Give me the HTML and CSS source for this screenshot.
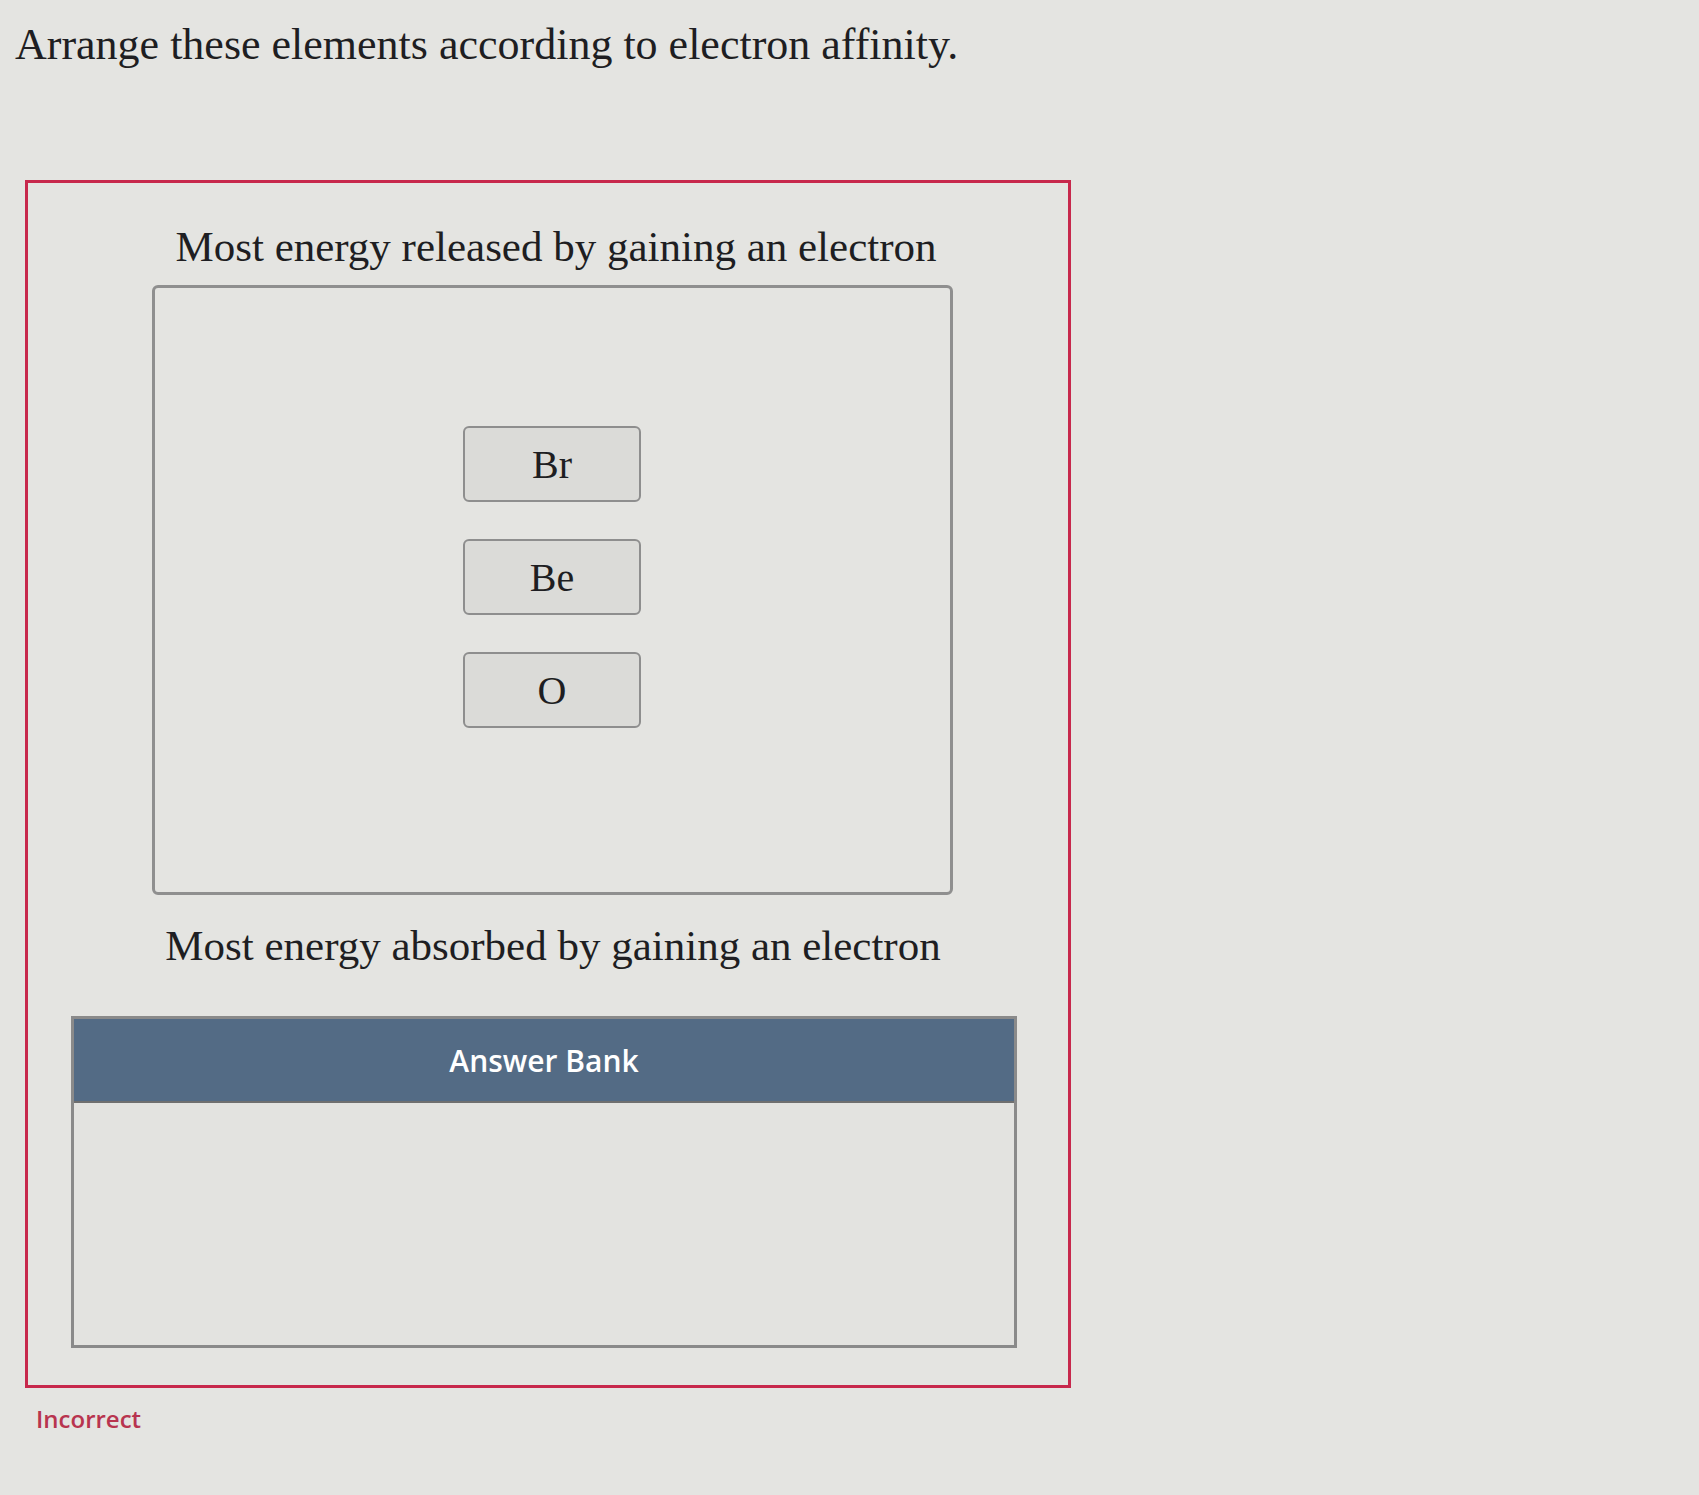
FILE: index.html
```html
<!DOCTYPE html>
<html lang="en">
<head>
<meta charset="utf-8">
<title>Arrange these elements according to electron affinity.</title>
<link rel="stylesheet" href="styles.css">
</head>
<body>
<div class="page">
  <h1 class="prompt">Arrange these elements according to electron affinity.</h1>
  <div class="question">
    <div class="label label-top">Most energy released by gaining an electron</div>
    <div class="dropzone">
      <div class="tile">Br</div>
      <div class="tile">Be</div>
      <div class="tile">O</div>
    </div>
    <div class="label label-bottom">Most energy absorbed by gaining an electron</div>
    <div class="bank">
      <div class="bank-header">Answer Bank</div>
      <div class="bank-body"></div>
    </div>
  </div>
  <div class="status">Incorrect</div>
</div>
</body>
</html>
```
FILE: styles.css
```css
html, body {
  margin: 0;
  padding: 0;
}
body {
  background: #e4e4e1;
  font-family: "Liberation Serif", "Times New Roman", serif;
  color: #1e1e22;
  width: 1699px;
  height: 1495px;
  overflow: hidden;
}
.page {
  padding: 14px 0 0 0;
}
.prompt {
  margin: 0 0 0 15px;
  font-weight: normal;
  font-size: 44px;
  line-height: 62px;
}
.question {
  margin: 104px 0 0 25px;
  width: 1046px;
  height: 1208px;
  box-sizing: border-box;
  border: 3px solid #c7284c;
  display: flex;
  flex-direction: column;
  align-items: center;
  padding-top: 40px;
}
.label {
  font-size: 43px;
  line-height: 48px;
}
.label-top {
  margin-left: 16px;
}
.dropzone {
  margin-top: 14px;
  width: 801px;
  height: 610px;
  box-sizing: border-box;
  border: 3px solid #8f8f8f;
  border-radius: 6px;
  display: flex;
  flex-direction: column;
  align-items: center;
  padding-top: 138px;
  gap: 37px;
  margin-left: 8px;
}
.tile {
  width: 178px;
  height: 76px;
  box-sizing: border-box;
  border: 2px solid #8e8e8e;
  border-radius: 6px;
  background: #dbdbd8;
  display: flex;
  align-items: center;
  justify-content: center;
  font-size: 40px;
}
.label-bottom {
  margin-top: 27px;
  margin-left: 10px;
}
.bank {
  margin-top: 46px;
  width: 946px;
  height: 332px;
  box-sizing: border-box;
  border: 3px solid #8a8a8a;
  display: flex;
  flex-direction: column;
  margin-right: 8px;
}
.bank-header {
  height: 82px;
  background: #536b85;
  color: #ffffff;
  font-family: "Open Sans", "Liberation Sans", sans-serif;
  font-weight: 600;
  font-size: 30px;
  display: flex;
  align-items: center;
  justify-content: center;
  border-bottom: 2px solid #6f6f6f;
}
.bank-body {
  flex: 1;
  background: #e3e3e0;
}
.status {
  margin: 14px 0 0 36px;
  font-family: "Open Sans", "Liberation Sans", sans-serif;
  font-weight: 600;
  font-size: 24px;
  line-height: 34px;
  color: #b8344f;
}
```
